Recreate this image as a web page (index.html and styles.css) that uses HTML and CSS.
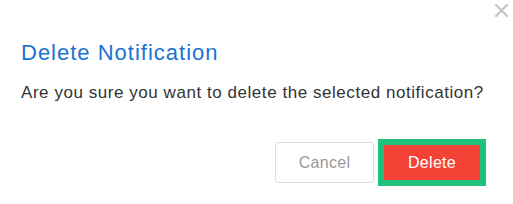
FILE: index.html
```html
<!DOCTYPE html>
<html lang="en">
<head>
    <meta charset="UTF-8">
    <title>Delete Notification</title>
    <link rel="stylesheet" href="styles.css">
</head>
<body>

    <div class="modal">
        <button class="close-btn" aria-label="Close">
            <svg width="13" height="13" viewBox="0 0 13 13">
                <path d="M1 1L12 12M12 1L1 12" stroke="#c4c4c4" stroke-width="2.2" stroke-linecap="square"/>
            </svg>
        </button>
        <h3 class="modal-title">Delete Notification</h3>
        <p class="modal-text">Are you sure you want to delete the selected notification?</p>
        <div class="modal-actions">
            <button class="btn btn-cancel">Cancel</button>
            <button class="btn btn-delete">Delete</button>
        </div>
    </div>

</body>
</html>
```

FILE: styles.css
```css
body {
    margin: 0;
    font-family: "Liberation Sans", Arial, sans-serif;
    background: #fff;
}
.modal {
    position: relative;
    width: 513px;
    height: 204px;
    padding: 39px 21px 0 21px;
    box-sizing: border-box;
}
.close-btn {
    position: absolute;
    top: 4px;
    right: 5px;
    padding: 0;
    border: none;
    background: none;
    cursor: pointer;
}
.modal-title {
    margin: 0;
    font-size: 22px;
    letter-spacing: 1px;
    font-weight: normal;
    line-height: 28px;
    color: #1a73d3;
}
.modal-text {
    margin: 15px 0 0 0;
    font-size: 17px;
    letter-spacing: 0.55px;
    line-height: 22px;
    color: #333;
}
.modal-actions {
    display: flex;
    justify-content: flex-end;
    align-items: center;
    gap: 8px;
    margin-top: 38px;
    padding-right: 6px;
}
.btn {
    font-family: inherit;
    font-size: 16px;
    letter-spacing: 0.3px;
    border-radius: 3px;
    cursor: pointer;
}
.btn-cancel {
    width: 99px;
    height: 41px;
    background: #fff;
    border: 1px solid #ddd;
    color: #999;
}
.btn-delete {
    width: 96px;
    height: 35px;
    background: #f44336;
    border: none;
    border-radius: 0;
    color: #fff;
    outline: 6px solid #1ec27a;
    margin-right: 6px;
    margin-left: 2px;
}
```
